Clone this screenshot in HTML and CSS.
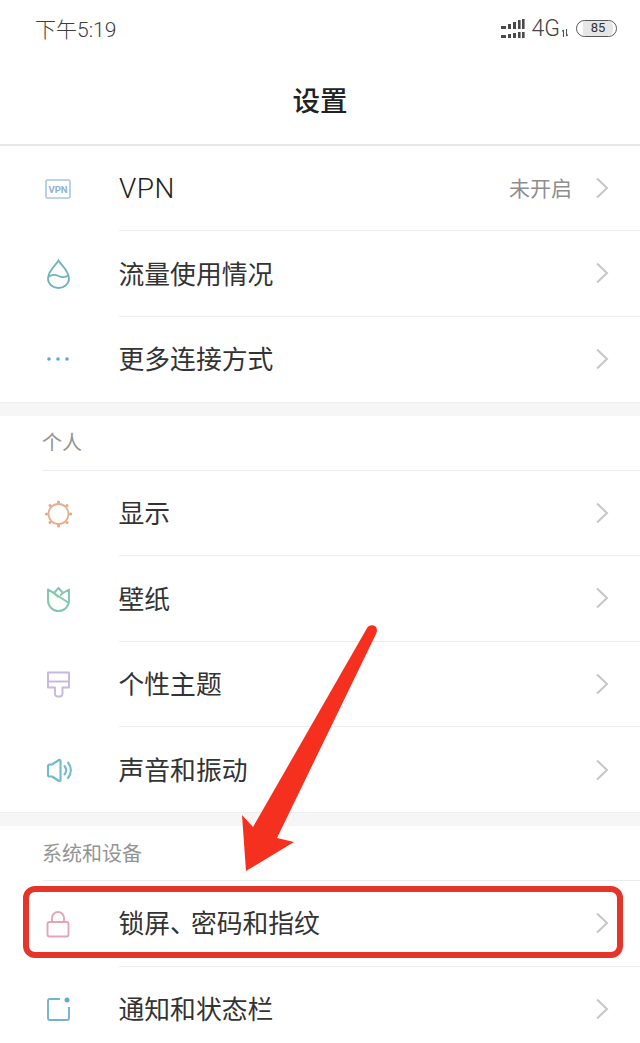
FILE: index.html
```html
<!DOCTYPE html>
<html lang="zh-CN">
<head>
<meta charset="utf-8">
<title>设置</title>
<link rel="stylesheet" href="styles.css">
</head>
<body>
<div class="screen">
  <div class="status">
    <span class="clock">下午5:19</span>
    <div class="status-right">
      <svg class="signal" width="24" height="20" viewBox="0 0 24 20"><g fill="#4a4a4a"><rect x="0" y="7" width="5" height="3"/><rect x="7" y="5" width="3" height="5"/><rect x="12" y="3" width="3" height="7"/><rect x="17" y="1" width="2.600" height="9"/><rect x="21" y="0" width="2.600" height="10"/><rect x="0" y="16" width="5" height="3"/><rect x="7" y="15" width="3" height="4"/><rect x="12" y="14" width="3" height="5"/><rect x="17" y="13" width="2.600" height="6"/><rect x="21" y="13" width="2.600" height="6"/></g></svg>
      <span class="net">4G</span>
      <svg class="updown" width="6" height="8" viewBox="0 0 6 8"><path d="M1.500 8V1M.2 2.500 1.500 .8M4.500 0v7M5.800 5.500 4.500 7.200" stroke="#555" stroke-width="1.100" fill="none"/></svg>
      <div class="battery"><span class="battery-level">85</span></div>
    </div>
  </div>
  <header class="title-bar"><h1 class="title">设置</h1></header>

  <section class="group">
    <div class="row">
      <svg class="icon" width="28" height="32" viewBox="0 0 28 32"><rect x="2" y="7" width="24" height="18" rx="1.500" fill="none" stroke="#a9c6de" stroke-width="1.600"/><text class="vpn-glyph" x="14" y="19.500" text-anchor="middle">VPN</text></svg>
      <div class="row-body"><span class="label latin">VPN</span><span class="value">未开启</span><svg class="chev" width="14" height="24" viewBox="0 0 14 24"><path d="M2 2.500 12 12 2 21.500" fill="none" stroke="#c6c6c6" stroke-width="2"/></svg></div>
    </div>
    <div class="row">
      <svg class="icon" width="28" height="32" viewBox="0 0 28 32"><g fill="none" stroke="#6fb2c2" stroke-width="1.800"><path d="M14.500 2.500C17 7 25 12.500 25 20.500a10.500 9.500 0 0 1-21 0C4 12.500 12 7 14.500 2.500Z"/><path d="M4.200 19c4-3 7-2.500 10.300-1s7 1.800 10.300-1"/></g></svg>
      <div class="row-body"><span class="label">流量使用情况</span><svg class="chev" width="14" height="24" viewBox="0 0 14 24"><path d="M2 2.500 12 12 2 21.500" fill="none" stroke="#c6c6c6" stroke-width="2"/></svg></div>
    </div>
    <div class="row row-last">
      <svg class="icon" width="28" height="32" viewBox="0 0 28 32"><g fill="#5fabc6"><circle cx="5" cy="16" r="1.800"/><circle cx="14" cy="16" r="1.800"/><circle cx="23" cy="16" r="1.800"/></g></svg>
      <div class="row-body"><span class="label">更多连接方式</span><svg class="chev" width="14" height="24" viewBox="0 0 14 24"><path d="M2 2.500 12 12 2 21.500" fill="none" stroke="#c6c6c6" stroke-width="2"/></svg></div>
    </div>
  </section>

  <div class="gap"></div>

  <section class="group">
    <div class="section-label"><span class="section-text">个人</span></div>
    <div class="row">
      <svg class="icon" width="28" height="32" viewBox="0 0 28 32"><circle cx="14.500" cy="16" r="10" fill="none" stroke="#e5b08f" stroke-width="1.800"/><g fill="#e5a888"><circle cx="14.500" cy="4" r="1.600"/><circle cx="14.500" cy="28" r="1.600"/><circle cx="2.500" cy="16" r="1.600"/><circle cx="26.500" cy="16" r="1.600"/><circle cx="6" cy="7.500" r="1.500"/><circle cx="23" cy="7.500" r="1.500"/><circle cx="6" cy="24.500" r="1.500"/><circle cx="23" cy="24.500" r="1.500"/></g></svg>
      <div class="row-body"><span class="label">显示</span><svg class="chev" width="14" height="24" viewBox="0 0 14 24"><path d="M2 2.500 12 12 2 21.500" fill="none" stroke="#c6c6c6" stroke-width="2"/></svg></div>
    </div>
    <div class="row">
      <svg class="icon" width="28" height="32" viewBox="0 0 28 32"><g fill="none" stroke="#84c8ad" stroke-width="2" stroke-linejoin="round"><path d="M4 6.500 10 10 14.500 5 19 10 25 6.500V17.500a10.500 10.500 0 0 1-21 0Z"/><path d="M4 6.500 25 20"/><path d="M10 10 14.500 14"/><path d="M19 10 16 12.500"/></g></svg>
      <div class="row-body"><span class="label">壁纸</span><svg class="chev" width="14" height="24" viewBox="0 0 14 24"><path d="M2 2.500 12 12 2 21.500" fill="none" stroke="#c6c6c6" stroke-width="2"/></svg></div>
    </div>
    <div class="row">
      <svg class="icon" width="28" height="32" viewBox="0 0 28 32"><g fill="none" stroke="#c6b8df" stroke-width="1.900" stroke-linejoin="round"><path d="M4 4.500H25V19.500H18.500V26a2.500 2.500 0 0 1-2.500 2.500H13.500A2.500 2.500 0 0 1 11 26V19.500H4Z"/><path d="M4 13.500H25"/></g></svg>
      <div class="row-body"><span class="label">个性主题</span><svg class="chev" width="14" height="24" viewBox="0 0 14 24"><path d="M2 2.500 12 12 2 21.500" fill="none" stroke="#c6c6c6" stroke-width="2"/></svg></div>
    </div>
    <div class="row row-last">
      <svg class="icon" width="28" height="32" viewBox="0 0 28 32"><g fill="none" stroke="#72bad2" stroke-width="2.100" stroke-linejoin="round" stroke-linecap="round"><path d="M4 12a1.500 1.500 0 0 1 1.500-1.500H8L15 6a1 1 0 0 1 1.500 1V26a1 1 0 0 1-1.500 1L8 22.500H5.500A1.500 1.500 0 0 1 4 21Z"/><path d="M20.500 12a7 7 0 0 1 0 8.500"/><path d="M24 8.500a12 12 0 0 1 0 15.500"/></g></svg>
      <div class="row-body"><span class="label">声音和振动</span><svg class="chev" width="14" height="24" viewBox="0 0 14 24"><path d="M2 2.500 12 12 2 21.500" fill="none" stroke="#c6c6c6" stroke-width="2"/></svg></div>
    </div>
  </section>

  <div class="gap"></div>

  <section class="group">
    <div class="section-label"><span class="section-text">系统和设备</span></div>
    <div class="row">
      <svg class="icon" width="28" height="32" viewBox="0 0 28 32"><g fill="none" stroke="#e2a6b6" stroke-width="1.900" stroke-linejoin="round"><rect x="3.500" y="14" width="21" height="14.500" rx="2"/><path d="M8 14V10a6 6 0 0 1 12 0V14"/></g></svg>
      <div class="row-body"><span class="label">锁屏<span class="punct">、</span>密码和指纹</span><svg class="chev" width="14" height="24" viewBox="0 0 14 24"><path d="M2 2.500 12 12 2 21.500" fill="none" stroke="#c6c6c6" stroke-width="2"/></svg></div>
    </div>
    <div class="row">
      <svg class="icon" width="28" height="32" viewBox="0 0 28 32"><g fill="none" stroke="#74b3d0" stroke-width="1.900"><path d="M16 6H6a2 2 0 0 0-2 2V25a2 2 0 0 0 2 2H23a2 2 0 0 0 2-2V14"/></g><circle cx="23" cy="7" r="2.500" fill="#62a9cd"/></svg>
      <div class="row-body"><span class="label">通知和状态栏</span><svg class="chev" width="14" height="24" viewBox="0 0 14 24"><path d="M2 2.500 12 12 2 21.500" fill="none" stroke="#c6c6c6" stroke-width="2"/></svg></div>
    </div>
  </section>

  <div class="callout-box"></div>
  <svg class="callout-arrow" width="640" height="1043" viewBox="0 0 640 1043"><path d="M366.500 629C368 625 373 624 376 627 377.500 629 377 632 376 634L277 838 294 842 246 871 242 815 253 827Z" fill="#f5301f"/></svg>
</div>
</body>
</html>
```

FILE: styles.css
```css
* { box-sizing: border-box; }
html, body { margin: 0; padding: 0; background: #fff; }
body { font-family: "Noto Sans CJK SC", "Noto Sans", sans-serif; color: #333; }
.screen { position: relative; width: 640px; height: 1043px; overflow: hidden; background: #fff; }

.status { height: 58px; display: flex; align-items: center; justify-content: space-between; padding: 0 23px 3px 35px; }
.clock { font-family: Roboto, "Noto Sans CJK SC", sans-serif; font-size: 21px; font-weight: 300; color: #3c3c3c; }
.status-right { display: flex; align-items: center; padding-top: 2px; }
.signal { margin-right: 7px; }
.net { font-family: Roboto, sans-serif; font-size: 23px; font-weight: 300; color: #444; line-height: 1; }
.updown { margin: 8px 8px 0 2px; }
.battery { width: 41px; height: 17px; border: 1.500px solid #555; border-radius: 9px; padding: 0 3px 0 6px; display: flex; }
.battery-level { flex: 1; background: #e6e6e6; border-radius: 0 6px 6px 0; font-family: Roboto, sans-serif; font-size: 13px; font-weight: 400; line-height: 14px; text-align: center; color: #333; }

.title-bar { height: 88px; padding-bottom: 3px; display: flex; align-items: center; justify-content: center; border-bottom: 2px solid #e8e8e8; }
.title { margin: 0; font-size: 27.500px; font-weight: 500; color: #222; line-height: 1.2; }

.row { height: 85.330px; display: flex; align-items: center; padding-left: 44px; }
.icon { flex: none; margin-right: 47px; }
.row-body { flex: 1; height: 100%; display: flex; align-items: center; padding-right: 30px; border-bottom: 1px solid #ececec; }
.row-last .row-body { border-bottom: 0; }
.label { flex: 1; font-size: 25.800px; line-height: 1.2; color: #333; font-weight: 400; margin-left: -.5px; padding-bottom: 1px; }
.latin { font-family: Roboto, sans-serif; font-size: 28px; font-weight: 300; letter-spacing: .5px; color: #222; margin-left: 0; padding: 2px 0 0; }
.punct { letter-spacing: -5px; }
.value { font-size: 21px; color: #8e8e8e; margin: 0 23px 3px 0; }
.chev { flex: none; margin-right: 1px; }
.vpn-glyph { font-family: Roboto, sans-serif; font-size: 9.500px; font-weight: 700; fill: #8fb0cf; }

.gap { height: 14px; background: #f6f6f6; border-top: 1px solid #efefef; }
.section-label { height: 55px; margin-left: 43px; padding-bottom: 2px; display: flex; align-items: center; border-bottom: 1px solid #ececec; }
.section-text { margin-left: -1px; font-size: 20px; color: #949494; }

.callout-box { position: absolute; left: 23px; top: 886px; width: 600px; height: 72px; border: 6px solid #e5352b; border-radius: 12px; }
.callout-arrow { position: absolute; left: 0; top: 0; }
```
